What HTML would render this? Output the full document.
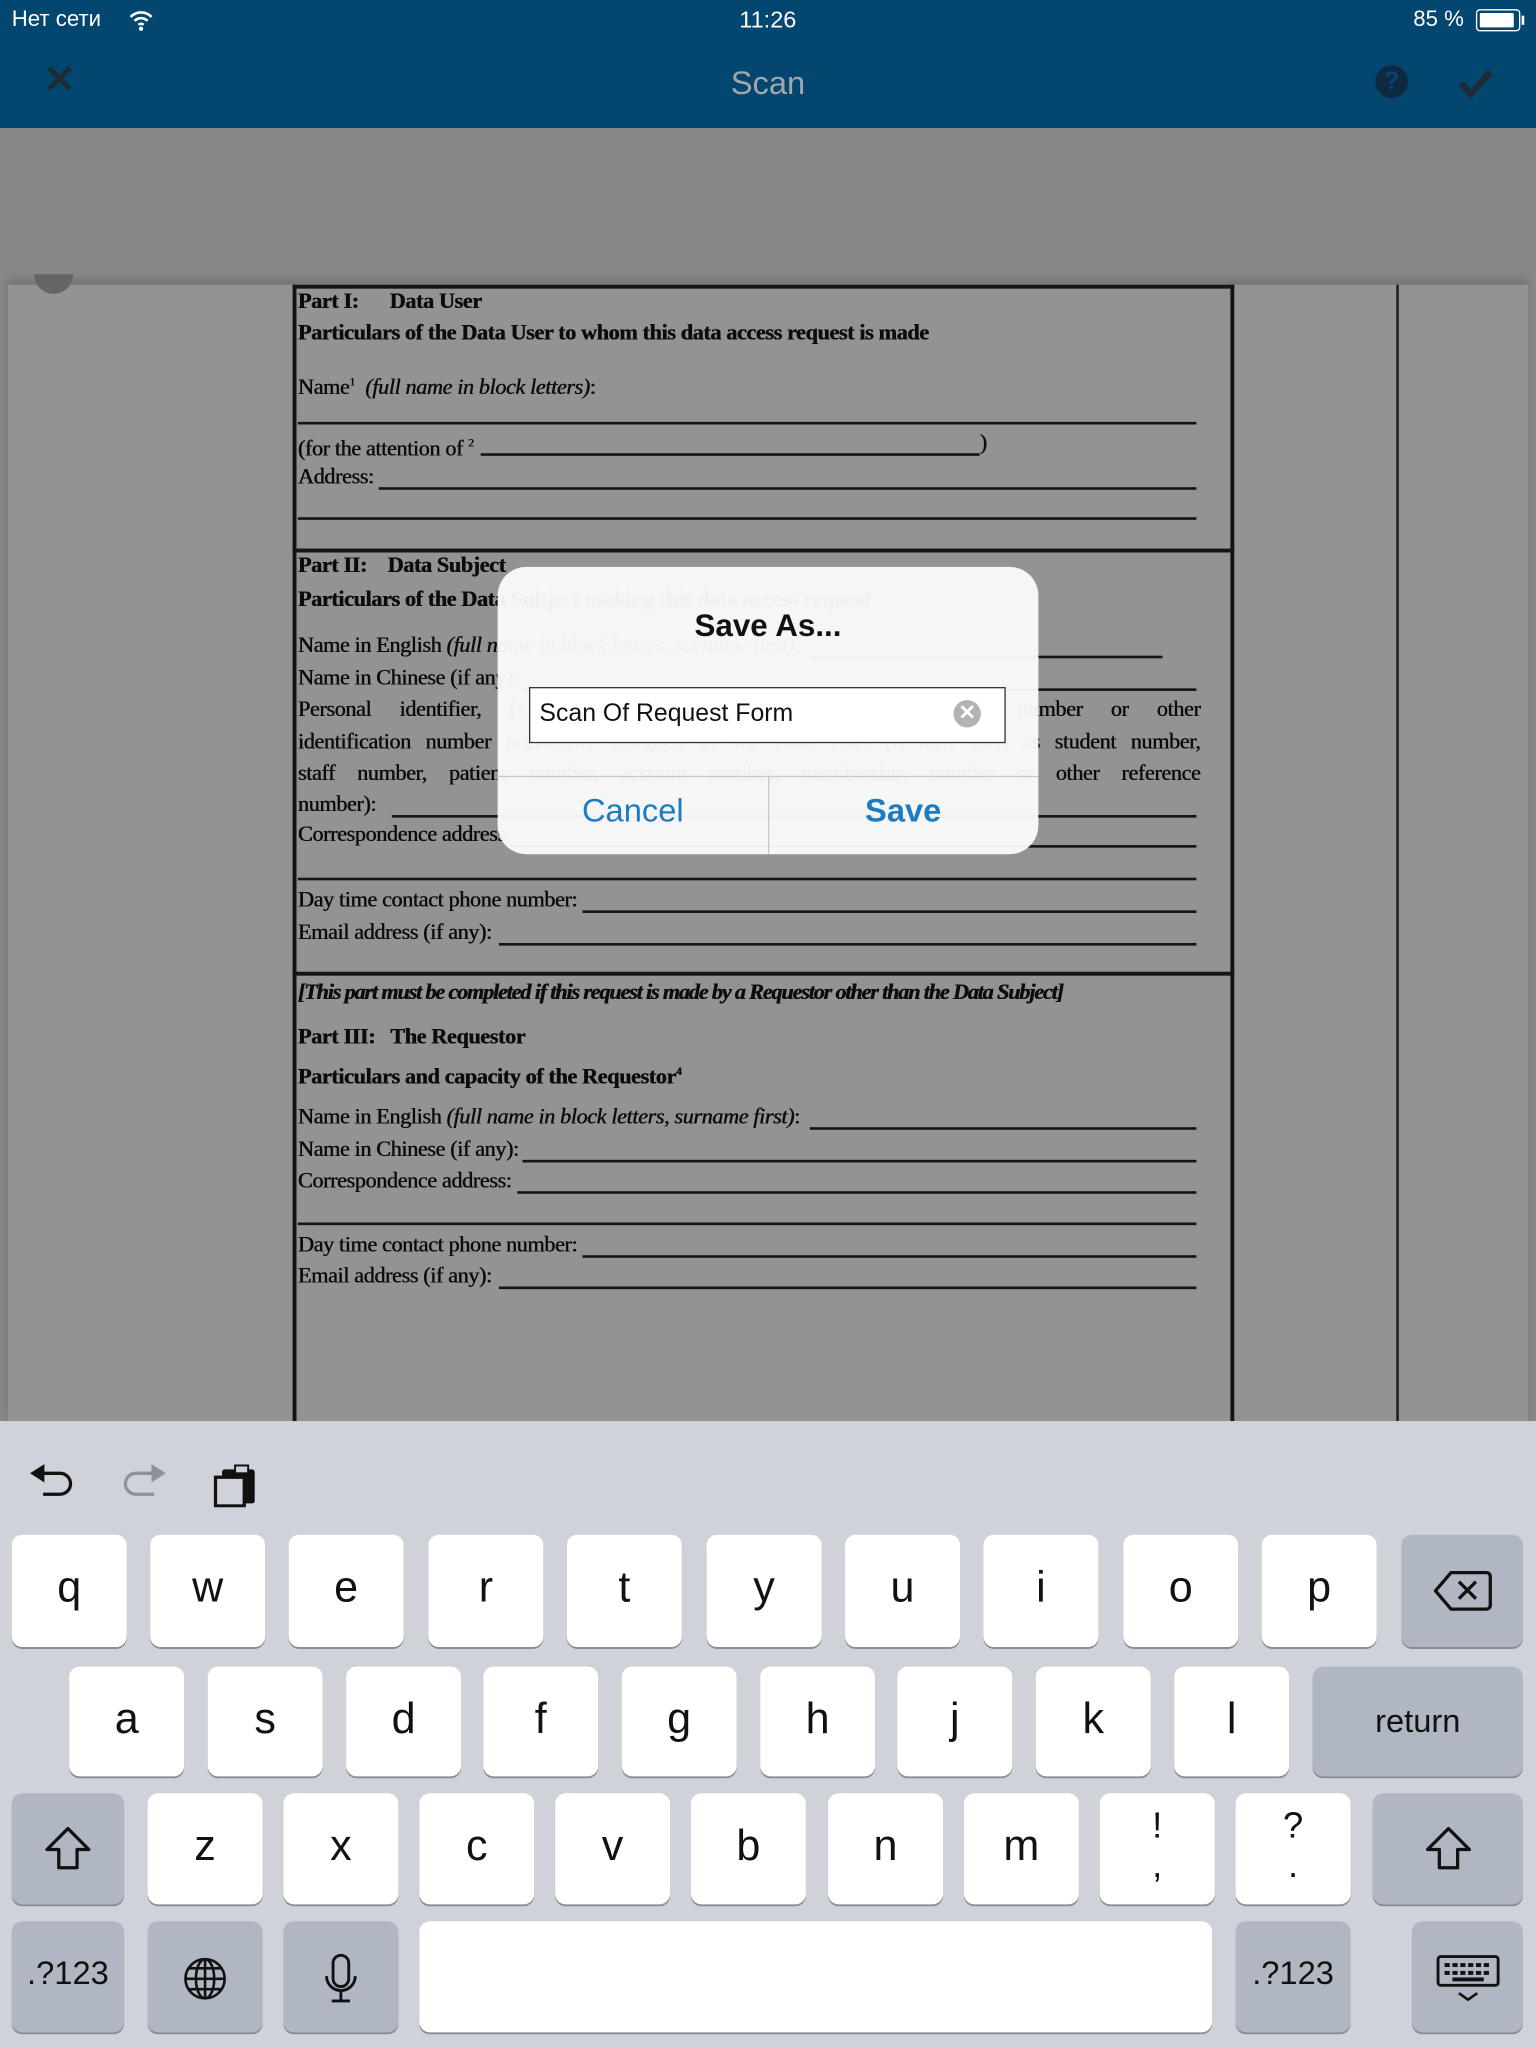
<!DOCTYPE html>
<html><head><meta charset="utf-8"><style>
*{margin:0;padding:0;box-sizing:border-box}
html,body{width:1536px;height:2048px;overflow:hidden;background:#858887}
#w{position:absolute;left:0;top:0;width:1176px;height:1568px;transform:scale(1.306122);transform-origin:0 0;font-family:"Liberation Sans",sans-serif}
.a{position:absolute}
.t{position:absolute;font-family:"Liberation Serif",serif;font-size:17px;letter-spacing:-0.3px;white-space:nowrap;color:#0c0c0c;line-height:16px;text-shadow:0.4px 0 0 #0c0c0c}
.b{font-weight:bold}
.ln{position:absolute;height:2px;background:#151515}
.k{position:absolute;width:88px;height:86px;background:#fff;border-radius:8px;box-shadow:0 1.5px 0 #8a8d93;font-size:33px;color:#111;text-align:center;line-height:80px}
.s{background:#b1b7c2}
</style></head><body><div id="w">
<!-- top bar -->
<div class="a" style="left:0;top:0;width:1176px;height:98px;background:#034670"></div>
<div class="a" style="left:9px;top:5px;color:#fff;font-size:17px">Нет сети</div>
<svg class="a" style="left:98px;top:7px" width="20" height="18" viewBox="0 0 20 18"><path d="M2 6a11 11 0 0 1 16 0M5 9a7 7 0 0 1 10 0M8 12a3 3 0 0 1 4 0" stroke="#fff" stroke-width="2" fill="none"/><circle cx="10" cy="15" r="1.6" fill="#fff"/></svg>
<div class="a" style="left:566px;top:5px;color:#fff;font-size:18px">11:26</div>
<div class="a" style="left:1082px;top:5px;color:#fff;font-size:17px">85 %</div>
<div class="a" style="left:1130px;top:7px;width:34px;height:17px;border:1.5px solid #fff;border-radius:3px;padding:1.5px"><div style="width:26px;height:11px;background:#fff;border-radius:1px"></div></div>
<div class="a" style="left:1165px;top:12px;width:2px;height:7px;background:#fff"></div>
<div class="a" style="left:33px;top:44px;color:#1d2b36;font-size:30px;font-weight:bold;line-height:36px">✕</div>
<div class="a" style="left:0;width:1176px;top:50px;text-align:center;color:#9fa7ad;font-size:25px">Scan</div>
<div class="a" style="left:1053px;top:50px;width:25px;height:25px;border-radius:50%;background:#0d2a40;color:#034670;font-weight:bold;font-size:19px;text-align:center;line-height:25px">?</div>
<svg class="a" style="left:1116px;top:52px" width="28" height="24" viewBox="0 0 28 24"><path d="M3 12l7 8L25 3" stroke="#1d2b36" stroke-width="5" fill="none"/></svg>
<!-- page -->
<div class="a" style="left:6px;top:218px;width:1164px;height:870px;background:#939393;box-shadow:0 -4px 6px rgba(0,0,0,.15)"></div>
<div class="a" style="left:26px;top:210px;width:30px;height:15px;border-radius:0 0 15px 15px;background:#666"></div>
<div class="a" style="left:224px;top:218px;width:3px;height:870px;background:#151515"></div>
<div class="a" style="left:942px;top:218px;width:3px;height:870px;background:#151515"></div>
<div class="a" style="left:1069px;top:218px;width:2px;height:870px;background:#222"></div>
<div class="a" style="left:224px;top:218px;width:721px;height:3px;background:#151515"></div>
<div class="a" style="left:224px;top:420px;width:721px;height:3px;background:#151515"></div>
<div class="a" style="left:224px;top:744px;width:721px;height:3px;background:#151515"></div>

<div class="t b" style="left:228px;top:223px">Part I:&nbsp;&nbsp;&nbsp;&nbsp;&nbsp; Data User</div>
<div class="t b" style="left:228px;top:247px">Particulars of the Data User to whom this data access request is made</div>
<div class="t" style="left:228px;top:284px">Name<sup style="font-size:9px">1</sup>&nbsp; <i>(full name in block letters)</i>:</div>
<div class="ln" style="left:228px;top:323px;width:688px"></div>
<div class="t" style="left:228px;top:331px">(for the attention of <sup style="font-size:9px">2</sup></div>
<div class="ln" style="left:368px;top:347px;width:382px"></div>
<div class="t" style="left:750px;top:331px">)</div>
<div class="t" style="left:228px;top:357px">Address:</div>
<div class="ln" style="left:290px;top:373px;width:626px"></div>
<div class="ln" style="left:228px;top:396px;width:688px"></div>

<div class="t b" style="left:228px;top:425px">Part II:&nbsp;&nbsp;&nbsp; Data Subject</div>
<div class="t b" style="left:228px;top:451px">Particulars of the Data Subject making this data access request</div>
<div class="t" style="left:228px;top:486px">Name in English <i>(full name in block letters, surname first)</i>:</div>
<div class="ln" style="left:620px;top:502px;width:270px"></div>
<div class="t" style="left:228px;top:511px">Name in Chinese (if any):</div>
<div class="ln" style="left:400px;top:527px;width:516px"></div>
<div class="t" style="left:228px;top:535px;width:691px;text-align:justify;text-align-last:justify">Personal identifier, (e.g. staff number, patient number, account number or other</div>
<div class="t" style="left:228px;top:560px;width:691px;text-align:justify;text-align-last:justify">identification number previously assigned by the Data User (if any, such as student number,</div>
<div class="t" style="left:228px;top:584px;width:691px;text-align:justify;text-align-last:justify">staff number, patient number, account number, membership number or other reference</div>
<div class="t" style="left:228px;top:608px">number):</div>
<div class="ln" style="left:300px;top:624px;width:616px"></div>
<div class="t" style="left:228px;top:631px">Correspondence address:</div>
<div class="ln" style="left:392px;top:647px;width:524px"></div>
<div class="ln" style="left:228px;top:672px;width:688px"></div>
<div class="t" style="left:228px;top:681px">Day time contact phone number:</div>
<div class="ln" style="left:446px;top:697px;width:470px"></div>
<div class="t" style="left:228px;top:706px">Email address (if any):</div>
<div class="ln" style="left:382px;top:722px;width:534px"></div>

<div class="t b" style="left:228px;top:752px;font-style:italic;letter-spacing:-0.9px">[This part must be completed if this request is made by a Requestor other than the Data Subject]</div>
<div class="t b" style="left:228px;top:786px">Part III:&nbsp;&nbsp; The Requestor</div>
<div class="t b" style="left:228px;top:812px">Particulars and capacity of the Requestor<sup style="font-size:9px">4</sup></div>
<div class="t" style="left:228px;top:847px">Name in English <i>(full name in block letters, surname first)</i>:</div>
<div class="ln" style="left:620px;top:863px;width:296px"></div>
<div class="t" style="left:228px;top:872px">Name in Chinese (if any):</div>
<div class="ln" style="left:400px;top:888px;width:516px"></div>
<div class="t" style="left:228px;top:896px">Correspondence address:</div>
<div class="ln" style="left:396px;top:912px;width:520px"></div>
<div class="ln" style="left:228px;top:936px;width:688px"></div>
<div class="t" style="left:228px;top:945px">Day time contact phone number:</div>
<div class="ln" style="left:446px;top:961px;width:470px"></div>
<div class="t" style="left:228px;top:969px">Email address (if any):</div>
<div class="ln" style="left:382px;top:985px;width:534px"></div>

<!-- dialog -->
<div class="a" style="left:381px;top:434px;width:414px;height:220px;background:rgba(250,250,250,.96);border-radius:22px"></div>
<div class="a" style="left:381px;top:466px;width:414px;text-align:center;font-size:24px;font-weight:bold;color:#111">Save As...</div>
<div class="a" style="left:405px;top:526px;width:365px;height:43px;background:#fff;border:1px solid #333"></div>
<div class="a" style="left:413px;top:536px;font-size:19px;color:#111">Scan Of Request Form</div>
<div class="a" style="left:730px;top:536px;width:21px;height:21px;border-radius:50%;background:#b3b3b3;color:#fff;font-size:16px;font-weight:bold;text-align:center;line-height:21px">✕</div>
<div class="a" style="left:381px;top:594px;width:414px;height:1px;background:#c9c9c9"></div>
<div class="a" style="left:588px;top:594px;width:1px;height:60px;background:#c9c9c9"></div>
<div class="a" style="left:381px;top:607px;width:207px;text-align:center;font-size:25px;color:#1d7cc0">Cancel</div>
<div class="a" style="left:588px;top:607px;width:207px;text-align:center;font-size:25px;font-weight:bold;color:#1d7cc0">Save</div>

<!-- keyboard -->
<div class="a" style="left:0;top:1088px;width:1176px;height:480px;background:#cfd2d8"></div>
<svg class="a" style="left:20px;top:1118px" width="40" height="36" viewBox="0 0 40 36"><path d="M12 10h14a8 8 0 0 1 0 16H13" stroke="#111" stroke-width="2.5" fill="none"/><path d="M3 10l11-7v14z" fill="#111"/></svg>
<svg class="a" style="left:90px;top:1118px" width="40" height="36" viewBox="0 0 40 36"><path d="M28 10H14a8 8 0 0 0 0 16h14" stroke="#8d9198" stroke-width="2.5" fill="none"/><path d="M37 10l-11-7v14z" fill="#8d9198"/></svg>
<svg class="a" style="left:162px;top:1118px" width="36" height="36" viewBox="0 0 36 36"><rect x="8" y="7" width="25" height="26" rx="2" fill="#111"/><rect x="3" y="13" width="22" height="22" fill="#cfd2d8" stroke="#111" stroke-width="2.5"/><rect x="18" y="4" width="10" height="6" fill="#cfd2d8" stroke="#111" stroke-width="1.5"/></svg>

<div class="k" style="left:9px;top:1175px">q</div>
<div class="k" style="left:115px;top:1175px">w</div>
<div class="k" style="left:221px;top:1175px">e</div>
<div class="k" style="left:328px;top:1175px">r</div>
<div class="k" style="left:434px;top:1175px">t</div>
<div class="k" style="left:541px;top:1175px">y</div>
<div class="k" style="left:647px;top:1175px">u</div>
<div class="k" style="left:753px;top:1175px">i</div>
<div class="k" style="left:860px;top:1175px">o</div>
<div class="k" style="left:966px;top:1175px">p</div>
<div class="k s" style="left:1073px;top:1175px;width:93px"><svg style="margin-top:26px" width="46" height="34" viewBox="0 0 46 34"><path d="M14 3h27a3 3 0 0 1 3 3v22a3 3 0 0 1-3 3H14L2 17z" stroke="#111" stroke-width="2.5" fill="none" stroke-linejoin="round"/><path d="M20 10l13 13M33 10L20 23" stroke="#111" stroke-width="2.5"/></svg></div>

<div class="k" style="left:53px;top:1276px;height:84px">a</div>
<div class="k" style="left:159px;top:1276px;height:84px">s</div>
<div class="k" style="left:265px;top:1276px;height:84px">d</div>
<div class="k" style="left:370px;top:1276px;height:84px">f</div>
<div class="k" style="left:476px;top:1276px;height:84px">g</div>
<div class="k" style="left:582px;top:1276px;height:84px">h</div>
<div class="k" style="left:687px;top:1276px;height:84px">j</div>
<div class="k" style="left:793px;top:1276px;height:84px">k</div>
<div class="k" style="left:899px;top:1276px;height:84px">l</div>
<div class="k s" style="left:1005px;top:1276px;width:161px;height:84px;font-size:25px;line-height:84px">return</div>

<div class="k s" style="left:9px;top:1373px;width:86px;height:85px"><svg style="margin-top:24px" width="40" height="38" viewBox="0 0 40 38"><path d="M20 3L4 19h9v14h14V19h9z" stroke="#111" stroke-width="2.5" fill="none" stroke-linejoin="round"/></svg></div>
<div class="k" style="left:113px;top:1373px;height:85px">z</div>
<div class="k" style="left:217px;top:1373px;height:85px">x</div>
<div class="k" style="left:321px;top:1373px;height:85px">c</div>
<div class="k" style="left:425px;top:1373px;height:85px">v</div>
<div class="k" style="left:529px;top:1373px;height:85px">b</div>
<div class="k" style="left:634px;top:1373px;height:85px">n</div>
<div class="k" style="left:738px;top:1373px;height:85px">m</div>
<div class="k" style="left:842px;top:1373px;height:85px;line-height:30px;font-size:28px;padding-top:10px">!<br>,</div>
<div class="k" style="left:946px;top:1373px;height:85px;line-height:30px;font-size:28px;padding-top:10px">?<br>.</div>
<div class="k s" style="left:1051px;top:1373px;width:115px;height:85px"><svg style="margin-top:24px" width="40" height="38" viewBox="0 0 40 38"><path d="M20 3L4 19h9v14h14V19h9z" stroke="#111" stroke-width="2.5" fill="none" stroke-linejoin="round"/></svg></div>

<div class="k s" style="left:9px;top:1471px;width:86px;height:85px;font-size:25px">.?123</div>
<div class="k s" style="left:113px;top:1471px;height:85px"><svg style="margin-top:26px" width="36" height="36" viewBox="0 0 36 36" fill="none" stroke="#111" stroke-width="2"><circle cx="18" cy="18" r="15"/><ellipse cx="18" cy="18" rx="7" ry="15"/><path d="M18 3v30M3 18h30M6 10h24M6 26h24"/></svg></div>
<div class="k s" style="left:217px;top:1471px;height:85px"><svg style="margin-top:24px" width="30" height="40" viewBox="0 0 30 40" fill="none" stroke="#111" stroke-width="2.2"><rect x="9" y="2" width="12" height="24" rx="6"/><path d="M4 18a11 11 0 0 0 22 0M15 29v7M8 37h14"/></svg></div>
<div class="k" style="left:321px;top:1471px;width:607px;height:85px"></div>
<div class="k s" style="left:946px;top:1471px;height:85px;font-size:25px">.?123</div>
<div class="k s" style="left:1081px;top:1471px;width:85px;height:85px"><svg style="margin-top:24px" width="50" height="40" viewBox="0 0 50 40"><rect x="2" y="3" width="46" height="22" rx="2" fill="none" stroke="#111" stroke-width="2.2"/><g fill="#111"><rect x="7" y="8" width="4" height="3"/><rect x="13" y="8" width="4" height="3"/><rect x="19" y="8" width="4" height="3"/><rect x="25" y="8" width="4" height="3"/><rect x="31" y="8" width="4" height="3"/><rect x="37" y="8" width="4" height="3"/><rect x="7" y="14" width="4" height="3"/><rect x="13" y="14" width="4" height="3"/><rect x="19" y="14" width="4" height="3"/><rect x="25" y="14" width="4" height="3"/><rect x="31" y="14" width="4" height="3"/><rect x="37" y="14" width="4" height="3"/><rect x="13" y="19" width="24" height="3"/></g><path d="M18 31l7 5 7-5" stroke="#111" stroke-width="2" fill="none"/></svg></div>
</div></body></html>
